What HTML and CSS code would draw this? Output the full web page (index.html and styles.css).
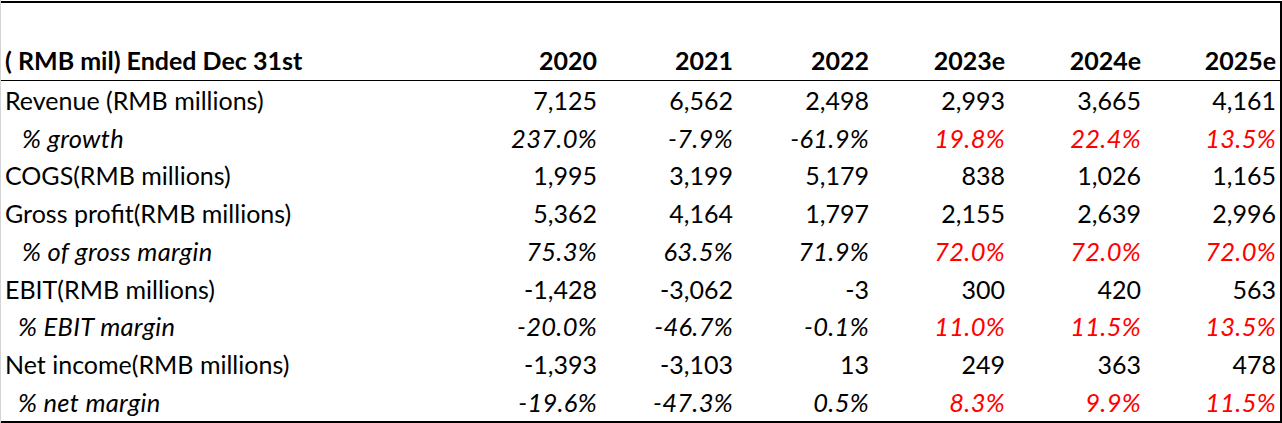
FILE: index.html
```html
<!DOCTYPE html>
<html>
<head>
<meta charset="utf-8">
<link rel="stylesheet" href="styles.css">
</head>
<body>
<div class="frame">
<table class="fin">
  <colgroup>
    <col class="c-label"><col class="c-num"><col class="c-num"><col class="c-num"><col class="c-num"><col class="c-num"><col class="c-last">
  </colgroup>
  <thead>
    <tr class="head">
      <th class="label">( RMB mil) Ended Dec 31st</th>
      <th>2020</th><th>2021</th><th>2022</th><th>2023e</th><th>2024e</th><th>2025e</th>
    </tr>
  </thead>
  <tbody>
    <tr class="row">
      <td class="label">Revenue (RMB millions)</td>
      <td>7,125</td><td>6,562</td><td>2,498</td><td>2,993</td><td>3,665</td><td>4,161</td>
    </tr>
    <tr class="row pct">
      <td class="label ind2">% growth</td>
      <td>237.0%</td><td>-7.9%</td><td>-61.9%</td><td class="est">19.8%</td><td class="est">22.4%</td><td class="est">13.5%</td>
    </tr>
    <tr class="row">
      <td class="label">COGS(RMB millions)</td>
      <td>1,995</td><td>3,199</td><td>5,179</td><td>838</td><td>1,026</td><td>1,165</td>
    </tr>
    <tr class="row">
      <td class="label">Gross profit(RMB millions)</td>
      <td>5,362</td><td>4,164</td><td>1,797</td><td>2,155</td><td>2,639</td><td>2,996</td>
    </tr>
    <tr class="row pct">
      <td class="label ind2">% of gross margin</td>
      <td>75.3%</td><td>63.5%</td><td>71.9%</td><td class="est">72.0%</td><td class="est">72.0%</td><td class="est">72.0%</td>
    </tr>
    <tr class="row">
      <td class="label">EBIT(RMB millions)</td>
      <td>-1,428</td><td>-3,062</td><td>-3</td><td>300</td><td>420</td><td>563</td>
    </tr>
    <tr class="row pct">
      <td class="label ind1">% EBIT margin</td>
      <td>-20.0%</td><td>-46.7%</td><td>-0.1%</td><td class="est">11.0%</td><td class="est">11.5%</td><td class="est">13.5%</td>
    </tr>
    <tr class="row">
      <td class="label">Net income(RMB millions)</td>
      <td>-1,393</td><td>-3,103</td><td>13</td><td>249</td><td>363</td><td>478</td>
    </tr>
    <tr class="row pct">
      <td class="label ind1">% net margin</td>
      <td>-19.6%</td><td>-47.3%</td><td>0.5%</td><td class="est">8.3%</td><td class="est">9.9%</td><td class="est">11.5%</td>
    </tr>
  </tbody>
</table>
</div>
</body>
</html>
```

FILE: styles.css
```css
html, body {
  margin: 0;
  padding: 0;
  background: #ffffff;
}

.frame {
  width: 1282px;
  height: 423px;
  box-sizing: border-box;
  border-left: 1px solid #d4d4d4;
  padding-top: 1px;
  overflow: hidden;
}

.fin {
  width: 1281px;
  border-spacing: 0;
  border-collapse: separate;
  table-layout: fixed;
  border-top: 2px solid #000000;
  border-right: 2px solid #000000;
  border-bottom: 2px solid #000000;
  font-family: Lato, "Liberation Sans", sans-serif;
  font-size: 25px;
  color: #000000;
}

.c-label { width: 464px; }
.c-num { width: 136px; }
.c-last { width: 135px; }

.fin th,
.fin td {
  padding: 0 4px 0 0;
  line-height: 30px;
  text-align: right;
  white-space: nowrap;
}

.head { height: 78px; }

.fin th {
  font-weight: 700;
  vertical-align: bottom;
  padding-bottom: 5px;
  border-bottom: 1px solid #000000;
}

.row { height: 37.78px; }

.fin td {
  font-weight: 400;
  vertical-align: middle;
}

.fin .label {
  text-align: left;
  padding-left: 4px;
}

.fin .ind2 { padding-left: 21px; }
.fin .ind1 { padding-left: 17px; }

.pct td {
  font-style: italic;
  font-size: 25.5px;
  letter-spacing: 0.3px;
}

.fin td.est { color: #ff0000; }
```
